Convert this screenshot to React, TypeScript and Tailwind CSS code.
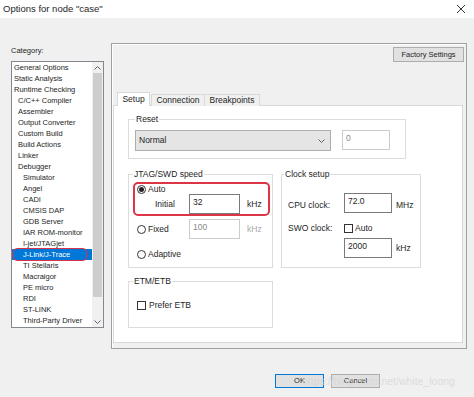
import React from "react";

const categories: [string, number][] = [
  ["General Options", 0],
  ["Static Analysis", 0],
  ["Runtime Checking", 0],
  ["C/C++ Compiler", 1],
  ["Assembler", 1],
  ["Output Converter", 1],
  ["Custom Build", 1],
  ["Build Actions", 1],
  ["Linker", 1],
  ["Debugger", 1],
  ["Simulator", 2],
  ["Angel", 2],
  ["CADI", 2],
  ["CMSIS DAP", 2],
  ["GDB Server", 2],
  ["IAR ROM-monitor", 2],
  ["I-jet/JTAGjet", 2],
  ["J-Link/J-Trace", 2],
  ["TI Stellaris", 2],
  ["Macraigor", 2],
  ["PE micro", 2],
  ["RDI", 2],
  ["ST-LINK", 2],
  ["Third-Party Driver", 2],
];

const indent: Record<number, string> = {
  0: "pl-[2px]",
  1: "pl-[6px]",
  2: "pl-[11px]",
};

function Chevron(props: { up?: boolean }) {
  return (
    <svg width="7" height="4" viewBox="0 0 7 4">
      <polyline
        points={props.up ? "0.5,3.5 3.5,0.5 6.5,3.5" : "0.5,0.5 3.5,3.5 6.5,0.5"}
        fill="none"
        stroke="#606060"
        strokeWidth="1"
      />
    </svg>
  );
}

function Radio(props: { checked?: boolean }) {
  return (
    <span className="flex h-[9px] w-[9px] shrink-0 items-center justify-center rounded-full border border-[#333] bg-white">
      {props.checked ? <span className="h-[5px] w-[5px] rounded-full bg-[#222]" /> : null}
    </span>
  );
}

function Check() {
  return <span className="h-[9px] w-[9px] shrink-0 border border-[#333] bg-white" />;
}

function Edit(props: { value: string; width: string; disabled?: boolean }) {
  return (
    <div
      className={`h-[20px] ${props.width} border bg-white pl-[3px] pt-[1px] leading-[12px] ${
        props.disabled ? "border-[#cccccc] text-[#8a8a8a]" : "border-[#7a7a7a]"
      }`}
    >
      {props.value}
    </div>
  );
}

export default function App() {
  return (
    <div className="relative flex h-[397px] w-[474px] flex-col overflow-hidden bg-[#f0f0f0] font-['Liberation_Sans',Arial,sans-serif] text-[#1e1e1e]">
      {/* title bar */}
      <div className="flex h-[18px] items-center justify-between bg-white pl-[3px] pr-[8px]">
        <span className="text-[9.5px] leading-[12px]">Options for node "case"</span>
        <svg width="10" height="10" viewBox="0 0 10 10">
          <path d="M1 1 L9 9 M9 1 L1 9" stroke="#333" strokeWidth="1" />
        </svg>
      </div>

      <div className="flex">
        {/* category list */}
        <div className="ml-[11px] w-[93px] pt-[27px]">
          <div className="text-[7.5px] leading-[11px]">Category:</div>
          <div className="mt-[5px] flex h-[267px] border border-[#828790] bg-white">
            <ul className="flex-1 text-[7.5px] leading-[11px]">
              {categories.map(([name, level]) => {
                const selected = name === "J-Link/J-Trace";
                return (
                  <li
                    key={name}
                    className={`relative h-[11px] whitespace-nowrap ${indent[level]} ${
                      selected ? "bg-[#0078d7] text-white" : ""
                    }`}
                  >
                    {name}
                    {selected ? (
                      <span className="absolute -top-[1px] -bottom-[1px] left-[1px] right-[5px] rounded-[4px] border-[1.5px] border-[#d8334a]" />
                    ) : null}
                  </li>
                );
              })}
            </ul>
            <div className="flex w-[11px] flex-col bg-[#f0f0f0]">
              <div className="flex h-[11px] items-center justify-center">
                <Chevron up />
              </div>
              <div className="mx-[1px] h-[224px] bg-[#cdcdcd]" />
              <div className="flex-1" />
              <div className="flex h-[11px] items-center justify-center">
                <Chevron />
              </div>
            </div>
          </div>
        </div>

        {/* options panel */}
        <div className="ml-[7px] mt-[25px] flex h-[306px] w-[356px] flex-col border border-[#a0a0a0] shadow-[inset_1px_1px_0_#fff] text-[8.5px]">
          <div className="flex justify-end pr-[2px] pt-[3px]">
            <button
              type="button"
              className="h-[15px] w-[71px] border border-[#adadad] bg-[#e1e1e1] text-[7.5px] leading-[13px]"
            >
              Factory Settings
            </button>
          </div>

          <div className="relative z-10 ml-[5px] mt-[30px] flex h-[14px] items-end leading-[11px]">
            <div className="flex h-[14px] w-[33px] items-center justify-center border border-b-0 border-[#d9d9d9] bg-white">
              Setup
            </div>
            <div className="ml-[1px] flex h-[12px] w-[54px] items-center justify-center border border-b-0 border-[#d9d9d9] bg-[#f0f0f0]">
              Connection
            </div>
            <div className="flex h-[12px] w-[55px] items-center justify-center border border-b-0 border-l-0 border-[#d9d9d9] bg-[#f0f0f0]">
              Breakpoints
            </div>
          </div>

          <div className="-mt-[1px] ml-[1px] h-[238px] w-[350px] border border-[#d9d9d9] bg-white pl-[14px] pt-[7px]">
            <fieldset className="h-[46px] w-[278px] border border-[#dcdcdc] pl-[6px] pt-[5px]">
              <legend className="px-[1px] leading-[12px]">Reset</legend>
              <div className="flex">
                <div className="flex h-[21px] w-[196px] items-center justify-between border border-[#adadad] bg-[#e5e5e5] pl-[3px] pr-[5px]">
                  <span>Normal</span>
                  <Chevron />
                </div>
                <div className="ml-[11px]">
                  <Edit value="0" width="w-[48px]" disabled />
                </div>
              </div>
            </fieldset>

            <div className="mt-[9px] flex items-start">
              <fieldset className="h-[100px] w-[145px] border border-[#dcdcdc] pl-[4px] pt-[2px]">
                <legend className="px-[1px] leading-[12px]">JTAG/SWD speed</legend>
                <div className="h-[34px] w-[137px] rounded-[5px] border-2 border-[#dc3545] pl-[2px]">
                  <div className="flex h-[10px] items-center gap-[2px] leading-[11px]">
                    <Radio checked />
                    <span>Auto</span>
                  </div>
                  <div className="flex h-[20px] items-center">
                    <span className="ml-[18px] w-[34px]">Initial</span>
                    <Edit value="32" width="w-[51px]" />
                    <span className="ml-[7px]">kHz</span>
                  </div>
                </div>
                <div className="ml-[4px] mt-[3px] flex h-[20px] items-center">
                  <div className="flex w-[52px] items-center gap-[2px]">
                    <Radio />
                    <span>Fixed</span>
                  </div>
                  <Edit value="100" width="w-[51px]" disabled />
                  <span className="ml-[7px] text-[#a8a8a8]">kHz</span>
                </div>
                <div className="ml-[4px] mt-[9px] flex h-[12px] items-center gap-[2px]">
                  <Radio />
                  <span>Adaptive</span>
                </div>
              </fieldset>

              <fieldset className="ml-[8px] h-[100px] w-[140px] border border-[#dcdcdc] pl-[6px] pt-[13px]">
                <legend className="-ml-[4px] px-[1px] leading-[12px]">Clock setup</legend>
                <div className="flex h-[20px] items-center">
                  <span className="w-[56px] pt-[4px]">CPU clock:</span>
                  <Edit value="72.0" width="w-[48px]" />
                  <span className="ml-[4px] pt-[4px]">MHz</span>
                </div>
                <div className="mt-[9px] flex h-[12px] items-center">
                  <span className="w-[56px]">SWO clock:</span>
                  <Check />
                  <span className="ml-[2px]">Auto</span>
                </div>
                <div className="ml-[56px] mt-[4px] flex h-[20px] items-center">
                  <Edit value="2000" width="w-[48px]" />
                  <span className="ml-[4px]">kHz</span>
                </div>
              </fieldset>
            </div>

            <fieldset className="mt-[7px] h-[53px] w-[145px] border border-[#dcdcdc] pl-[8px] pt-[12px]">
              <legend className="-ml-[4px] px-[1px] leading-[12px]">ETM/ETB</legend>
              <div className="flex h-[12px] items-center gap-[3px]">
                <Check />
                <span>Prefer ETB</span>
              </div>
            </fieldset>
          </div>
        </div>
      </div>

      {/* dialog buttons */}
      <div className="mt-[25px] flex justify-end gap-[7px] pr-[94px] text-[7.5px]">
        <button
          type="button"
          className="h-[14px] w-[49px] border border-[#0078d7] bg-[#e1e1e1] leading-[12px]"
        >
          OK
        </button>
        <button
          type="button"
          className="h-[14px] w-[49px] border border-[#adadad] bg-[#e1e1e1] leading-[12px]"
        >
          Cancel
        </button>
      </div>

      <span className="pointer-events-none absolute left-[302px] top-[375px] text-[10.5px] leading-[12px] text-[#d6d6d6]/80">
        https://blog.csdn.net/white_loong
      </span>
    </div>
  );
}
